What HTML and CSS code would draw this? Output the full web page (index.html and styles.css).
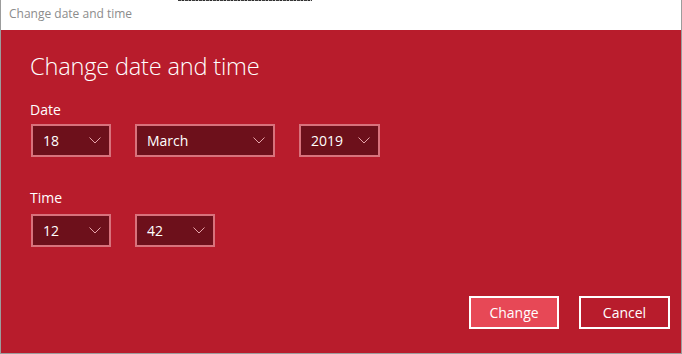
FILE: index.html
```html
<!DOCTYPE html>
<html>
<head>
<meta charset="utf-8">
<link rel="stylesheet" href="styles.css">
</head>
<body>
<div class="window">
  <div class="behind"><div class="behind-ink"></div></div>
  <div class="titlebar">Change date and time</div>
  <div class="content">
    <h1 class="heading">Change date and time</h1>
    <div class="label">Date</div>
    <div class="row">
      <div class="select w-day"><span>18</span><svg class="chev" width="12" height="7" viewBox="0 0 12 7"><path d="M0.5 0.5 L6 6 L11.5 0.5" fill="none" stroke="#e6a3a9" stroke-width="1"/></svg></div>
      <div class="select w-month"><span>March</span><svg class="chev" width="12" height="7" viewBox="0 0 12 7"><path d="M0.5 0.5 L6 6 L11.5 0.5" fill="none" stroke="#e6a3a9" stroke-width="1"/></svg></div>
      <div class="select w-year"><span>2019</span><svg class="chev" width="12" height="7" viewBox="0 0 12 7"><path d="M0.5 0.5 L6 6 L11.5 0.5" fill="none" stroke="#e6a3a9" stroke-width="1"/></svg></div>
    </div>
    <div class="label label-time">Time</div>
    <div class="row row-time">
      <div class="select w-day"><span>12</span><svg class="chev" width="12" height="7" viewBox="0 0 12 7"><path d="M0.5 0.5 L6 6 L11.5 0.5" fill="none" stroke="#e6a3a9" stroke-width="1"/></svg></div>
      <div class="select w-day"><span>42</span><svg class="chev" width="12" height="7" viewBox="0 0 12 7"><path d="M0.5 0.5 L6 6 L11.5 0.5" fill="none" stroke="#e6a3a9" stroke-width="1"/></svg></div>
    </div>
    <div class="actions">
      <button class="btn btn-primary">Change</button>
      <button class="btn">Cancel</button>
    </div>
  </div>
</div>
</body>
</html>
```
FILE: styles.css
```css
html, body {
  margin: 0;
  padding: 0;
  background: #ffffff;
}
.window {
  width: 682px;
  height: 354px;
  box-sizing: border-box;
  border-left: 1px solid #9c9c9c;
  border-right: 1px solid #9c9c9c;
  border-bottom: 1px solid #9c9c9c;
  display: flex;
  flex-direction: column;
  font-family: "Open Sans", "Noto Sans", sans-serif;
  overflow: hidden;
}
.behind {
  height: 1px;
  flex: 0 0 1px;
  padding-left: 177px;
  background: #ffffff;
}
.behind-ink {
  width: 134px;
  height: 1px;
  background: repeating-linear-gradient(90deg, #3a3a3a 0 3px, #9a9a9a 3px 4px, #2a2a2a 4px 6px, #c8c8c8 6px 7px);
}
.titlebar {
  height: 29px;
  flex: 0 0 29px;
  box-sizing: border-box;
  padding-left: 8px;
  padding-top: 5px;
  font-size: 12px;
  line-height: 16px;
  color: #8c8c8c;
  background: #ffffff;
}
.content {
  flex: 1;
  background: #b81c2c;
  padding: 20px 11px 0 29px;
  display: flex;
  flex-direction: column;
  color: #ffffff;
}
.heading {
  margin: 0;
  font-size: 23.6px;
  font-weight: 300;
  line-height: 32px;
  letter-spacing: -0.2px;
}
.label {
  margin-top: 18px;
  font-size: 14px;
  line-height: 20px;
}
.label-time {
  margin-top: 31px;
}
.row {
  display: flex;
  gap: 24px;
  margin-top: 4px;
  margin-left: 1px;
}
.row-time {
  margin-top: 6px;
}
.select {
  height: 33px;
  box-sizing: border-box;
  border: 2px solid #d8727c;
  background: #6d101b;
  display: flex;
  align-items: center;
  justify-content: space-between;
  padding: 0 8px 0 10px;
  font-size: 14px;
}
.select span {
  line-height: 20px;
}
.w-day { width: 80px; }
.w-month { width: 140px; }
.w-year { width: 81px; }
.chev {
  display: block;
}
.actions {
  margin-top: auto;
  margin-bottom: 24px;
  display: flex;
  justify-content: flex-end;
  gap: 20px;
}
.btn {
  width: 91px;
  height: 33px;
  box-sizing: border-box;
  border: 2px solid #ffffff;
  background: #b81c2c;
  color: #ffffff;
  font-family: "Open Sans", "Noto Sans", sans-serif;
  font-size: 14px;
  padding: 0;
  margin: 0;
}
.btn-primary {
  background: #e74856;
  width: 90px;
}
```
